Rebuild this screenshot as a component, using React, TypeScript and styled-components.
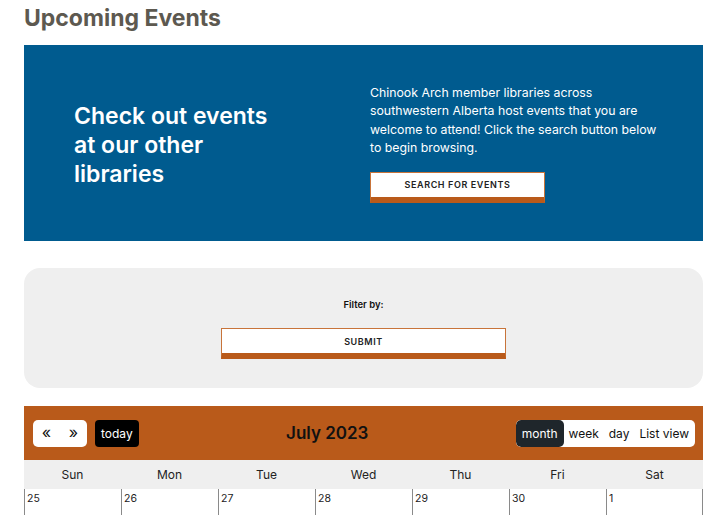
import React from "react"
import styled, { createGlobalStyle } from "styled-components"

const GlobalStyle = createGlobalStyle`
  body {
    margin: 0;
    background: #fff;
    font-family: "Inter", "Noto Sans", sans-serif;
  }
`

const Page = styled.div`
  padding: 0 17px 0 24px;
`

const Title = styled.h1`
  margin: 3px 0 12px;
  font-size: 23px;
  line-height: 30px;
  font-weight: 700;
  color: #5d5950;
`

const Banner = styled.section`
  background: #005b8f;
  height: 196px;
  padding: 0 30px 0 50px;
  display: grid;
  grid-template-columns: 282px 1fr;
  column-gap: 14px;
  align-items: center;
  color: #fff;
`

const BannerHeading = styled.h2`
  margin: 0;
  font-size: 23px;
  line-height: 29px;
  font-weight: 600;
  padding-top: 4px;
`

const BannerText = styled.p`
  margin: 0 0 14px;
  font-size: 12.3px;
  line-height: 18.5px;
  font-weight: 400;
`

const OrangeButton = styled.button<{ $width: number }>`
  display: block;
  box-sizing: border-box;
  width: ${(p) => p.$width}px;
  height: 31px;
  background: #fff;
  border: 1px solid #c8743a;
  border-bottom: 6px solid #b95a1a;
  font-family: inherit;
  font-size: 9px;
  font-weight: 600;
  letter-spacing: 0.6px;
  color: #222;
  text-transform: uppercase;
  padding: 0;
  cursor: pointer;
`

const FilterPanel = styled.section`
  margin-top: 27px;
  height: 120px;
  background: #efefef;
  border-radius: 16px;
  display: flex;
  flex-direction: column;
  align-items: center;
  padding-top: 31px;
  box-sizing: border-box;
`

const FilterLabel = styled.div`
  font-size: 9.5px;
  font-weight: 600;
  color: #111;
  margin-bottom: 18px;
`

const CalHeader = styled.div`
  margin-top: 18px;
  height: 54px;
  background: #b95a1a;
  display: flex;
  align-items: center;
  justify-content: space-between;
  padding: 0 8px 0 9px;
`

const Group = styled.div`
  display: flex;
  background: #fff;
  border-radius: 5px;
  height: 27px;
  overflow: hidden;
`

const GroupButton = styled.button<{ $active?: boolean }>`
  border: none;
  height: 27px;
  padding: 0 ${(p) => (p.$active ? "6px" : "5px")};
  background: ${(p) => (p.$active ? "#1f262b" : "transparent")};
  color: ${(p) => (p.$active ? "#fff" : "#111")};
  border-radius: ${(p) => (p.$active ? "5px" : "0")};
  font-family: inherit;
  font-size: 12px;
  cursor: pointer;
`

const ArrowButton = styled.button`
  border: none;
  background: transparent;
  width: 27px;
  height: 27px;
  font-family: inherit;
  font-size: 16px;
  line-height: 1;
  color: #111;
  padding: 0 0 2px;
  cursor: pointer;
`

const TodayButton = styled.button`
  margin-left: 8px;
  height: 27px;
  padding: 0 6px;
  background: #000;
  color: #fff;
  border: none;
  border-radius: 4px;
  font-family: inherit;
  font-size: 12px;
  cursor: pointer;
`

const LeftTools = styled.div`
  display: flex;
  align-items: center;
`

const MonthTitle = styled.h2`
  margin: 0;
  font-size: 17px;
  font-weight: 600;
  color: #111;
`

const RightGroup = styled(Group)`
  padding-right: 1px;
`

const Grid = styled.div`
  display: grid;
  grid-template-columns: repeat(7, 1fr);
`

const DayName = styled.div`
  height: 29px;
  background: #efefef;
  display: flex;
  align-items: center;
  justify-content: center;
  font-size: 12px;
  color: #222;
`

const DayCell = styled.div<{ $last?: boolean }>`
  height: 30px;
  border-left: 1px solid #8a8a8a;
  border-right: ${(p) => (p.$last ? "1px solid #8a8a8a" : "none")};
  font-size: 10.5px;
  color: #222;
  padding: 3px 2px;
`

const days = ["Sun", "Mon", "Tue", "Wed", "Thu", "Fri", "Sat"]
const dates = ["25", "26", "27", "28", "29", "30", "1"]

export default function App() {
  return (
    <Page>
      <GlobalStyle />
      <Title>Upcoming Events</Title>
      <Banner>
        <BannerHeading>
          Check out events
          <br />
          at our other
          <br />
          libraries
        </BannerHeading>
        <div>
          <BannerText>
            Chinook Arch member libraries across
            <br />
            southwestern Alberta host events that you are
            <br />
            welcome to attend! Click the search button below
            <br />
            to begin browsing.
          </BannerText>
          <OrangeButton $width={175}>Search for events</OrangeButton>
        </div>
      </Banner>
      <FilterPanel>
        <FilterLabel>Filter by:</FilterLabel>
        <OrangeButton $width={285}>Submit</OrangeButton>
      </FilterPanel>
      <CalHeader>
        <LeftTools>
          <Group>
            <ArrowButton>«</ArrowButton>
            <ArrowButton>»</ArrowButton>
          </Group>
          <TodayButton>today</TodayButton>
        </LeftTools>
        <MonthTitle>July 2023</MonthTitle>
        <RightGroup>
          <GroupButton $active>month</GroupButton>
          <GroupButton>week</GroupButton>
          <GroupButton>day</GroupButton>
          <GroupButton>List view</GroupButton>
        </RightGroup>
      </CalHeader>
      <Grid>
        {days.map((d) => (
          <DayName key={d}>{d}</DayName>
        ))}
        {dates.map((d, i) => (
          <DayCell key={d} $last={i === 6}>
            {d}
          </DayCell>
        ))}
      </Grid>
    </Page>
  )
}
